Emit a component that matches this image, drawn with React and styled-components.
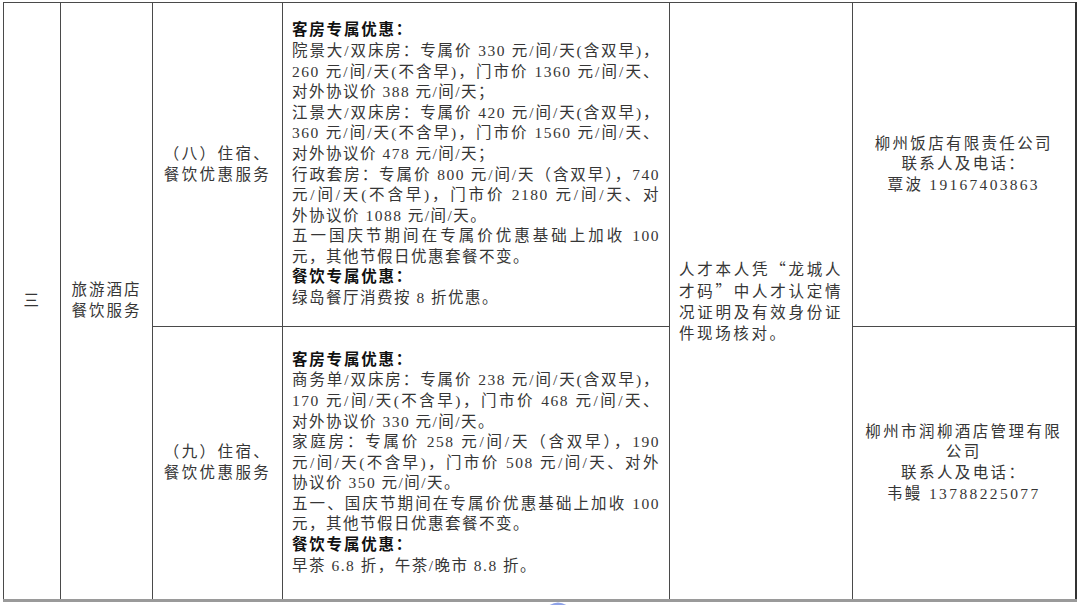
import React from 'react';
import styled, { createGlobalStyle } from 'styled-components';

const GlobalStyle = createGlobalStyle`
  html, body {
    margin: 0;
    padding: 0;
    background: #ffffff;
  }
  body {
    font-family: 'Liberation Serif', 'Noto Sans CJK SC', serif;
    color: #333333;
  }
`;

const Page = styled.div`
  width: 1080px;
  height: 605px;
  box-sizing: border-box;
  padding: 2px 5px 0 3px;
  overflow: hidden;
  background: #ffffff;
`;

const Sheet = styled.table`
  width: 1072px;
  border-collapse: collapse;
  table-layout: fixed;
  border-right: 2px solid #333333;
  border-bottom: 3px solid #9a9a9a;
`;

const Row = styled.tr`
  height: ${(p) => p.$h}px;
`;

const Cell = styled.td`
  border: 1px solid #4a4a4a;
  vertical-align: middle;
  padding: ${(p) => p.$pad || '0 9px'};
  text-align: ${(p) => p.$align || 'left'};
  font-size: ${(p) => p.$fs || '15.5px'};
  line-height: 20.6px;
  letter-spacing: ${(p) => p.$ls || '1.5px'};
  color: #363636;
`;

const Line = styled.div`
  text-align: ${(p) => (p.$full ? 'justify' : 'inherit')};
  text-align-last: ${(p) => (p.$full ? 'justify' : 'auto')};
  white-space: nowrap;
`;

const Heading = styled.div`
  font-weight: 700;
  color: #111111;
  white-space: nowrap;
  letter-spacing: 1.8px;
`;

const Cjk = styled.span`
  font-family: 'Noto Sans CJK SC', sans-serif;
`;

const Mark = styled.div`
  padding-left: 543px;
  height: 8px;
  line-height: 0;
`;

const offerA = [
  { h: '客房专属优惠：' },
  { t: '院景大/双床房：专属价 330 元/间/天(含双早)，', f: true },
  { t: '260 元/间/天(不含早)，门市价 1360 元/间/天、', f: true },
  { t: '对外协议价 388 元/间/天；' },
  { t: '江景大/双床房：专属价 420 元/间/天(含双早)，', f: true },
  { t: '360 元/间/天(不含早)，门市价 1560 元/间/天、', f: true },
  { t: '对外协议价 478 元/间/天；' },
  { t: '行政套房：专属价 800 元/间/天（含双早），740', f: true },
  { t: '元/间/天(不含早)，门市价 2180 元/间/天、对', f: true },
  { t: '外协议价 1088 元/间/天。' },
  { t: '五一国庆节期间在专属价优惠基础上加收 100', f: true },
  { t: '元，其他节假日优惠套餐不变。' },
  { h: '餐饮专属优惠：' },
  { t: '绿岛餐厅消费按 8 折优惠。' },
];

const offerB = [
  { h: '客房专属优惠：' },
  { t: '商务单/双床房：专属价 238 元/间/天(含双早)，', f: true },
  { t: '170 元/间/天(不含早)，门市价 468 元/间/天、', f: true },
  { t: '对外协议价 330 元/间/天。' },
  { t: '家庭房：专属价 258 元/间/天（含双早），190', f: true },
  { t: '元/间/天(不含早)，门市价 508 元/间/天、对外', f: true },
  { t: '协议价 350 元/间/天。' },
  { t: '五一、国庆节期间在专属价优惠基础上加收 100', f: true },
  { t: '元，其他节假日优惠套餐不变。' },
  { h: '餐饮专属优惠：' },
  { t: '早茶 6.8 折，午茶/晚市 8.8 折。' },
];

const renderLines = (lines) =>
  lines.map((l, i) =>
    l.h ? <Heading key={i}>{l.h}</Heading> : <Line key={i} $full={l.f}>{l.t}</Line>
  );

const App = () => (
  <>
    <GlobalStyle />
    <Page>
      <Sheet>
        <colgroup>
          <col style={{ width: 57 }} />
          <col style={{ width: 92 }} />
          <col style={{ width: 130 }} />
          <col style={{ width: 387 }} />
          <col style={{ width: 183 }} />
          <col style={{ width: 223 }} />
        </colgroup>
        <tbody>
          <Row $h={324}>
            <Cell rowSpan={2} $align="center" $pad="0">三</Cell>
            <Cell rowSpan={2} $align="center" $pad="0" $ls="2px">
              <Line>旅游酒店</Line>
              <Line>餐饮服务</Line>
            </Cell>
            <Cell $align="center" $pad="0" $ls="2.4px">
              <Line>（八）住宿、</Line>
              <Line>餐饮优惠服务</Line>
            </Cell>
            <Cell>{renderLines(offerA)}</Cell>
            <Cell rowSpan={2} $ls="2.6px">
              <Line $full>人才本人凭<Cjk>“</Cjk>龙城人</Line>
              <Line $full>才码<Cjk>”</Cjk>中人才认定情</Line>
              <Line $full>况证明及有效身份证</Line>
              <Line>件现场核对。</Line>
            </Cell>
            <Cell $align="center" $pad="0" $ls="2.3px">
              <Line>柳州饭店有限责任公司</Line>
              <Line>联系人及电话：</Line>
              <Line>覃波 19167403863</Line>
            </Cell>
          </Row>
          <Row $h={274}>
            <Cell $align="center" $pad="0" $ls="2.4px">
              <Line>（九）住宿、</Line>
              <Line>餐饮优惠服务</Line>
            </Cell>
            <Cell>{renderLines(offerB)}</Cell>
            <Cell $align="center" $pad="0" $ls="2.4px">
              <Line>柳州市润柳酒店管理有限</Line>
              <Line>公司</Line>
              <Line>联系人及电话：</Line>
              <Line>韦鳗 13788225077</Line>
            </Cell>
          </Row>
        </tbody>
      </Sheet>
      <Mark>
        <svg width="24" height="6" viewBox="0 0 24 6">
          <path d="M2 6 Q12 -2 22 6" fill="none" stroke="#8fa3e8" strokeWidth="3" />
        </svg>
      </Mark>
    </Page>
  </>
);

export default App;
